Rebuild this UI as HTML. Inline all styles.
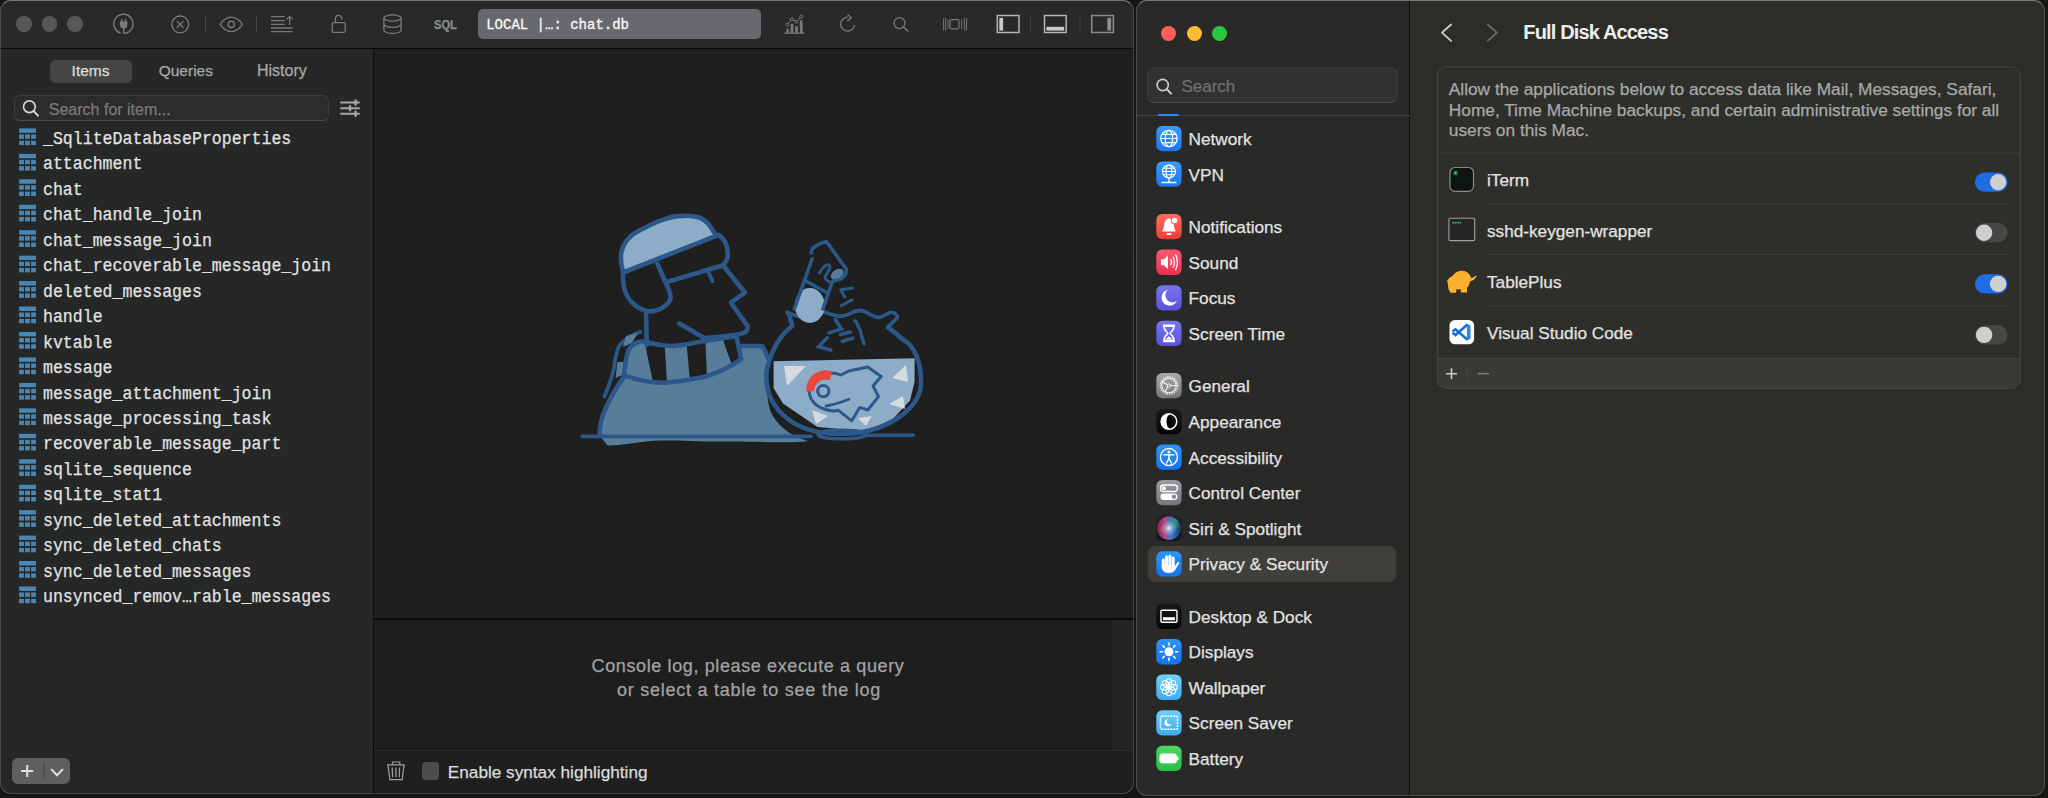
<!DOCTYPE html>
<html><head><meta charset="utf-8">
<style>
*{margin:0;padding:0;box-sizing:border-box}
html,body{width:2048px;height:798px;overflow:hidden;background:#161616;font-family:'Liberation Sans',sans-serif}
.a{position:absolute}
.t{position:absolute;white-space:pre;-webkit-text-stroke:0.25px currentColor}
</style></head><body>

<div class="a" style="left:0;top:0;width:1134px;height:794px;border-radius:11px;overflow:hidden;background:#1f1f1f">
<div class="a" style="left:0.00px;top:0.00px;width:1134.00px;height:48.00px;background:#272a29;"></div>
<div class="a" style="left:0.00px;top:47.50px;width:1134.00px;height:1.50px;background:#0b0b0b;"></div>
<div class="a" style="left:0.00px;top:49.00px;width:373.00px;height:745.00px;background:#262828;"></div>
<div class="a" style="left:372.50px;top:49.00px;width:1.50px;height:745.00px;background:#0b0b0b;"></div>
<div class="a" style="left:16.40px;top:16.40px;width:15.20px;height:15.20px;background:#565858;border-radius:50%"></div>
<div class="a" style="left:41.90px;top:16.40px;width:15.20px;height:15.20px;background:#565858;border-radius:50%"></div>
<div class="a" style="left:67.40px;top:16.40px;width:15.20px;height:15.20px;background:#565858;border-radius:50%"></div>
<div class="a" style="left:477.70px;top:9.00px;width:283.60px;height:29.70px;background:#68696c;border-radius:5px"></div>
<div class="t" style="left:486.20px;top:18px;font-size:14px;line-height:14px;color:#f6f6f6;font-weight:normal;font-family:'Liberation Mono',monospace;-webkit-text-stroke:0.35px #f6f6f6">LOCAL |…: chat.db</div>
<div class="t" style="left:434.20px;top:19px;font-size:12.5px;line-height:12.5px;color:#8d8d8d;font-weight:bold;font-family:'Liberation Sans',sans-serif;transform:scaleX(0.89);transform-origin:left">SQL</div>
<div class="a" style="left:50.00px;top:60.00px;width:82.00px;height:22.60px;background:#454545;border-radius:6px"></div>
<div class="t" style="left:71.60px;top:63px;font-size:15.5px;line-height:15.5px;color:#dedede;font-weight:normal;font-family:'Liberation Sans',sans-serif;">Items</div>
<div class="t" style="left:158.70px;top:63px;font-size:15.5px;line-height:15.5px;color:#a9a9a9;font-weight:normal;font-family:'Liberation Sans',sans-serif;">Queries</div>
<div class="t" style="left:257.00px;top:63px;font-size:16px;line-height:16px;color:#a9a9a9;font-weight:normal;font-family:'Liberation Sans',sans-serif;">History</div>
<div class="a" style="left:14.00px;top:95.00px;width:315.00px;height:26.00px;background:#2c2c2c;border-radius:6px;border:1px solid #3b3c3c;border-bottom-color:#4a4a4a"></div>
<div class="t" style="left:48.80px;top:102px;font-size:16px;line-height:16px;color:#7a7a7a;font-weight:normal;font-family:'Liberation Sans',sans-serif;">Search for item...</div>
<div class="t" style="left:43.00px;top:130px;font-size:19px;line-height:19px;color:#e3e3e3;font-weight:normal;font-family:'Liberation Mono',monospace;transform:scaleX(0.871);transform-origin:left">_SqliteDatabaseProperties</div>
<div class="t" style="left:43.00px;top:155px;font-size:19px;line-height:19px;color:#e3e3e3;font-weight:normal;font-family:'Liberation Mono',monospace;transform:scaleX(0.871);transform-origin:left">attachment</div>
<div class="t" style="left:43.00px;top:181px;font-size:19px;line-height:19px;color:#e3e3e3;font-weight:normal;font-family:'Liberation Mono',monospace;transform:scaleX(0.871);transform-origin:left">chat</div>
<div class="t" style="left:43.00px;top:206px;font-size:19px;line-height:19px;color:#e3e3e3;font-weight:normal;font-family:'Liberation Mono',monospace;transform:scaleX(0.871);transform-origin:left">chat_handle_join</div>
<div class="t" style="left:43.00px;top:232px;font-size:19px;line-height:19px;color:#e3e3e3;font-weight:normal;font-family:'Liberation Mono',monospace;transform:scaleX(0.871);transform-origin:left">chat_message_join</div>
<div class="t" style="left:43.00px;top:257px;font-size:19px;line-height:19px;color:#e3e3e3;font-weight:normal;font-family:'Liberation Mono',monospace;transform:scaleX(0.871);transform-origin:left">chat_recoverable_message_join</div>
<div class="t" style="left:43.00px;top:283px;font-size:19px;line-height:19px;color:#e3e3e3;font-weight:normal;font-family:'Liberation Mono',monospace;transform:scaleX(0.871);transform-origin:left">deleted_messages</div>
<div class="t" style="left:43.00px;top:308px;font-size:19px;line-height:19px;color:#e3e3e3;font-weight:normal;font-family:'Liberation Mono',monospace;transform:scaleX(0.871);transform-origin:left">handle</div>
<div class="t" style="left:43.00px;top:334px;font-size:19px;line-height:19px;color:#e3e3e3;font-weight:normal;font-family:'Liberation Mono',monospace;transform:scaleX(0.871);transform-origin:left">kvtable</div>
<div class="t" style="left:43.00px;top:359px;font-size:19px;line-height:19px;color:#e3e3e3;font-weight:normal;font-family:'Liberation Mono',monospace;transform:scaleX(0.871);transform-origin:left">message</div>
<div class="t" style="left:43.00px;top:385px;font-size:19px;line-height:19px;color:#e3e3e3;font-weight:normal;font-family:'Liberation Mono',monospace;transform:scaleX(0.871);transform-origin:left">message_attachment_join</div>
<div class="t" style="left:43.00px;top:410px;font-size:19px;line-height:19px;color:#e3e3e3;font-weight:normal;font-family:'Liberation Mono',monospace;transform:scaleX(0.871);transform-origin:left">message_processing_task</div>
<div class="t" style="left:43.00px;top:435px;font-size:19px;line-height:19px;color:#e3e3e3;font-weight:normal;font-family:'Liberation Mono',monospace;transform:scaleX(0.871);transform-origin:left">recoverable_message_part</div>
<div class="t" style="left:43.00px;top:461px;font-size:19px;line-height:19px;color:#e3e3e3;font-weight:normal;font-family:'Liberation Mono',monospace;transform:scaleX(0.871);transform-origin:left">sqlite_sequence</div>
<div class="t" style="left:43.00px;top:486px;font-size:19px;line-height:19px;color:#e3e3e3;font-weight:normal;font-family:'Liberation Mono',monospace;transform:scaleX(0.871);transform-origin:left">sqlite_stat1</div>
<div class="t" style="left:43.00px;top:512px;font-size:19px;line-height:19px;color:#e3e3e3;font-weight:normal;font-family:'Liberation Mono',monospace;transform:scaleX(0.871);transform-origin:left">sync_deleted_attachments</div>
<div class="t" style="left:43.00px;top:537px;font-size:19px;line-height:19px;color:#e3e3e3;font-weight:normal;font-family:'Liberation Mono',monospace;transform:scaleX(0.871);transform-origin:left">sync_deleted_chats</div>
<div class="t" style="left:43.00px;top:563px;font-size:19px;line-height:19px;color:#e3e3e3;font-weight:normal;font-family:'Liberation Mono',monospace;transform:scaleX(0.871);transform-origin:left">sync_deleted_messages</div>
<div class="t" style="left:43.00px;top:588px;font-size:19px;line-height:19px;color:#e3e3e3;font-weight:normal;font-family:'Liberation Mono',monospace;transform:scaleX(0.871);transform-origin:left">unsynced_remov…rable_messages</div>
<div class="a" style="left:11.60px;top:758.20px;width:58.30px;height:25.70px;background:#5f5f5f;border-radius:6px"></div>
<div class="a" style="left:374.00px;top:618.00px;width:760.00px;height:1.50px;background:#0b0b0b;"></div>
<div class="a" style="left:374.00px;top:619.50px;width:760.00px;height:131.00px;background:#1e1e1e;"></div>
<div class="a" style="left:1113.00px;top:619.50px;width:1.00px;height:131.00px;background:#2c2c2c;"></div>
<div class="a" style="left:1114.00px;top:619.50px;width:20.00px;height:131.00px;background:#242424;"></div>
<div class="a" style="left:374.00px;top:750.00px;width:760.00px;height:1.00px;background:#2d2d2d;"></div>
<div class="a" style="left:374.00px;top:751.00px;width:760.00px;height:43.00px;background:#1f1f1f;"></div>
<div class="t" style="left:591.60px;top:657px;font-size:18px;line-height:18px;color:#a3a3a3;font-weight:normal;font-family:'Liberation Sans',sans-serif;letter-spacing:0.62px;">Console log, please execute a query</div>
<div class="t" style="left:616.90px;top:681px;font-size:18px;line-height:18px;color:#a3a3a3;font-weight:normal;font-family:'Liberation Sans',sans-serif;letter-spacing:0.75px;">or select a table to see the log</div>
<div class="a" style="left:422.10px;top:762.00px;width:17.30px;height:18.00px;background:#4d4d4d;border-radius:4px"></div>
<div class="t" style="left:447.80px;top:764px;font-size:17.2px;line-height:17.2px;color:#dcdcdc;font-weight:normal;font-family:'Liberation Sans',sans-serif;">Enable syntax highlighting</div>
<svg class="a" style="left:0;top:0" width="1134" height="794" viewBox="0 0 1134 794"><rect x="19.1" y="128.40" width="16.9" height="4.4" fill="#4888b8"/><rect x="19.1" y="134.40" width="4.8" height="4.4" fill="#4888b8"/><rect x="25.1" y="134.40" width="4.8" height="4.4" fill="#4888b8"/><rect x="31.1" y="134.40" width="4.8" height="4.4" fill="#4888b8"/><rect x="19.1" y="140.70" width="4.8" height="4.4" fill="#4888b8"/><rect x="25.1" y="140.70" width="4.8" height="4.4" fill="#4888b8"/><rect x="31.1" y="140.70" width="4.8" height="4.4" fill="#4888b8"/><rect x="19.1" y="153.85" width="16.9" height="4.4" fill="#4888b8"/><rect x="19.1" y="159.85" width="4.8" height="4.4" fill="#4888b8"/><rect x="25.1" y="159.85" width="4.8" height="4.4" fill="#4888b8"/><rect x="31.1" y="159.85" width="4.8" height="4.4" fill="#4888b8"/><rect x="19.1" y="166.15" width="4.8" height="4.4" fill="#4888b8"/><rect x="25.1" y="166.15" width="4.8" height="4.4" fill="#4888b8"/><rect x="31.1" y="166.15" width="4.8" height="4.4" fill="#4888b8"/><rect x="19.1" y="179.30" width="16.9" height="4.4" fill="#4888b8"/><rect x="19.1" y="185.30" width="4.8" height="4.4" fill="#4888b8"/><rect x="25.1" y="185.30" width="4.8" height="4.4" fill="#4888b8"/><rect x="31.1" y="185.30" width="4.8" height="4.4" fill="#4888b8"/><rect x="19.1" y="191.60" width="4.8" height="4.4" fill="#4888b8"/><rect x="25.1" y="191.60" width="4.8" height="4.4" fill="#4888b8"/><rect x="31.1" y="191.60" width="4.8" height="4.4" fill="#4888b8"/><rect x="19.1" y="204.75" width="16.9" height="4.4" fill="#4888b8"/><rect x="19.1" y="210.75" width="4.8" height="4.4" fill="#4888b8"/><rect x="25.1" y="210.75" width="4.8" height="4.4" fill="#4888b8"/><rect x="31.1" y="210.75" width="4.8" height="4.4" fill="#4888b8"/><rect x="19.1" y="217.05" width="4.8" height="4.4" fill="#4888b8"/><rect x="25.1" y="217.05" width="4.8" height="4.4" fill="#4888b8"/><rect x="31.1" y="217.05" width="4.8" height="4.4" fill="#4888b8"/><rect x="19.1" y="230.20" width="16.9" height="4.4" fill="#4888b8"/><rect x="19.1" y="236.20" width="4.8" height="4.4" fill="#4888b8"/><rect x="25.1" y="236.20" width="4.8" height="4.4" fill="#4888b8"/><rect x="31.1" y="236.20" width="4.8" height="4.4" fill="#4888b8"/><rect x="19.1" y="242.50" width="4.8" height="4.4" fill="#4888b8"/><rect x="25.1" y="242.50" width="4.8" height="4.4" fill="#4888b8"/><rect x="31.1" y="242.50" width="4.8" height="4.4" fill="#4888b8"/><rect x="19.1" y="255.65" width="16.9" height="4.4" fill="#4888b8"/><rect x="19.1" y="261.65" width="4.8" height="4.4" fill="#4888b8"/><rect x="25.1" y="261.65" width="4.8" height="4.4" fill="#4888b8"/><rect x="31.1" y="261.65" width="4.8" height="4.4" fill="#4888b8"/><rect x="19.1" y="267.95" width="4.8" height="4.4" fill="#4888b8"/><rect x="25.1" y="267.95" width="4.8" height="4.4" fill="#4888b8"/><rect x="31.1" y="267.95" width="4.8" height="4.4" fill="#4888b8"/><rect x="19.1" y="281.10" width="16.9" height="4.4" fill="#4888b8"/><rect x="19.1" y="287.10" width="4.8" height="4.4" fill="#4888b8"/><rect x="25.1" y="287.10" width="4.8" height="4.4" fill="#4888b8"/><rect x="31.1" y="287.10" width="4.8" height="4.4" fill="#4888b8"/><rect x="19.1" y="293.40" width="4.8" height="4.4" fill="#4888b8"/><rect x="25.1" y="293.40" width="4.8" height="4.4" fill="#4888b8"/><rect x="31.1" y="293.40" width="4.8" height="4.4" fill="#4888b8"/><rect x="19.1" y="306.55" width="16.9" height="4.4" fill="#4888b8"/><rect x="19.1" y="312.55" width="4.8" height="4.4" fill="#4888b8"/><rect x="25.1" y="312.55" width="4.8" height="4.4" fill="#4888b8"/><rect x="31.1" y="312.55" width="4.8" height="4.4" fill="#4888b8"/><rect x="19.1" y="318.85" width="4.8" height="4.4" fill="#4888b8"/><rect x="25.1" y="318.85" width="4.8" height="4.4" fill="#4888b8"/><rect x="31.1" y="318.85" width="4.8" height="4.4" fill="#4888b8"/><rect x="19.1" y="332.00" width="16.9" height="4.4" fill="#4888b8"/><rect x="19.1" y="338.00" width="4.8" height="4.4" fill="#4888b8"/><rect x="25.1" y="338.00" width="4.8" height="4.4" fill="#4888b8"/><rect x="31.1" y="338.00" width="4.8" height="4.4" fill="#4888b8"/><rect x="19.1" y="344.30" width="4.8" height="4.4" fill="#4888b8"/><rect x="25.1" y="344.30" width="4.8" height="4.4" fill="#4888b8"/><rect x="31.1" y="344.30" width="4.8" height="4.4" fill="#4888b8"/><rect x="19.1" y="357.45" width="16.9" height="4.4" fill="#4888b8"/><rect x="19.1" y="363.45" width="4.8" height="4.4" fill="#4888b8"/><rect x="25.1" y="363.45" width="4.8" height="4.4" fill="#4888b8"/><rect x="31.1" y="363.45" width="4.8" height="4.4" fill="#4888b8"/><rect x="19.1" y="369.75" width="4.8" height="4.4" fill="#4888b8"/><rect x="25.1" y="369.75" width="4.8" height="4.4" fill="#4888b8"/><rect x="31.1" y="369.75" width="4.8" height="4.4" fill="#4888b8"/><rect x="19.1" y="382.90" width="16.9" height="4.4" fill="#4888b8"/><rect x="19.1" y="388.90" width="4.8" height="4.4" fill="#4888b8"/><rect x="25.1" y="388.90" width="4.8" height="4.4" fill="#4888b8"/><rect x="31.1" y="388.90" width="4.8" height="4.4" fill="#4888b8"/><rect x="19.1" y="395.20" width="4.8" height="4.4" fill="#4888b8"/><rect x="25.1" y="395.20" width="4.8" height="4.4" fill="#4888b8"/><rect x="31.1" y="395.20" width="4.8" height="4.4" fill="#4888b8"/><rect x="19.1" y="408.35" width="16.9" height="4.4" fill="#4888b8"/><rect x="19.1" y="414.35" width="4.8" height="4.4" fill="#4888b8"/><rect x="25.1" y="414.35" width="4.8" height="4.4" fill="#4888b8"/><rect x="31.1" y="414.35" width="4.8" height="4.4" fill="#4888b8"/><rect x="19.1" y="420.65" width="4.8" height="4.4" fill="#4888b8"/><rect x="25.1" y="420.65" width="4.8" height="4.4" fill="#4888b8"/><rect x="31.1" y="420.65" width="4.8" height="4.4" fill="#4888b8"/><rect x="19.1" y="433.80" width="16.9" height="4.4" fill="#4888b8"/><rect x="19.1" y="439.80" width="4.8" height="4.4" fill="#4888b8"/><rect x="25.1" y="439.80" width="4.8" height="4.4" fill="#4888b8"/><rect x="31.1" y="439.80" width="4.8" height="4.4" fill="#4888b8"/><rect x="19.1" y="446.10" width="4.8" height="4.4" fill="#4888b8"/><rect x="25.1" y="446.10" width="4.8" height="4.4" fill="#4888b8"/><rect x="31.1" y="446.10" width="4.8" height="4.4" fill="#4888b8"/><rect x="19.1" y="459.25" width="16.9" height="4.4" fill="#4888b8"/><rect x="19.1" y="465.25" width="4.8" height="4.4" fill="#4888b8"/><rect x="25.1" y="465.25" width="4.8" height="4.4" fill="#4888b8"/><rect x="31.1" y="465.25" width="4.8" height="4.4" fill="#4888b8"/><rect x="19.1" y="471.55" width="4.8" height="4.4" fill="#4888b8"/><rect x="25.1" y="471.55" width="4.8" height="4.4" fill="#4888b8"/><rect x="31.1" y="471.55" width="4.8" height="4.4" fill="#4888b8"/><rect x="19.1" y="484.70" width="16.9" height="4.4" fill="#4888b8"/><rect x="19.1" y="490.70" width="4.8" height="4.4" fill="#4888b8"/><rect x="25.1" y="490.70" width="4.8" height="4.4" fill="#4888b8"/><rect x="31.1" y="490.70" width="4.8" height="4.4" fill="#4888b8"/><rect x="19.1" y="497.00" width="4.8" height="4.4" fill="#4888b8"/><rect x="25.1" y="497.00" width="4.8" height="4.4" fill="#4888b8"/><rect x="31.1" y="497.00" width="4.8" height="4.4" fill="#4888b8"/><rect x="19.1" y="510.15" width="16.9" height="4.4" fill="#4888b8"/><rect x="19.1" y="516.15" width="4.8" height="4.4" fill="#4888b8"/><rect x="25.1" y="516.15" width="4.8" height="4.4" fill="#4888b8"/><rect x="31.1" y="516.15" width="4.8" height="4.4" fill="#4888b8"/><rect x="19.1" y="522.45" width="4.8" height="4.4" fill="#4888b8"/><rect x="25.1" y="522.45" width="4.8" height="4.4" fill="#4888b8"/><rect x="31.1" y="522.45" width="4.8" height="4.4" fill="#4888b8"/><rect x="19.1" y="535.60" width="16.9" height="4.4" fill="#4888b8"/><rect x="19.1" y="541.60" width="4.8" height="4.4" fill="#4888b8"/><rect x="25.1" y="541.60" width="4.8" height="4.4" fill="#4888b8"/><rect x="31.1" y="541.60" width="4.8" height="4.4" fill="#4888b8"/><rect x="19.1" y="547.90" width="4.8" height="4.4" fill="#4888b8"/><rect x="25.1" y="547.90" width="4.8" height="4.4" fill="#4888b8"/><rect x="31.1" y="547.90" width="4.8" height="4.4" fill="#4888b8"/><rect x="19.1" y="561.05" width="16.9" height="4.4" fill="#4888b8"/><rect x="19.1" y="567.05" width="4.8" height="4.4" fill="#4888b8"/><rect x="25.1" y="567.05" width="4.8" height="4.4" fill="#4888b8"/><rect x="31.1" y="567.05" width="4.8" height="4.4" fill="#4888b8"/><rect x="19.1" y="573.35" width="4.8" height="4.4" fill="#4888b8"/><rect x="25.1" y="573.35" width="4.8" height="4.4" fill="#4888b8"/><rect x="31.1" y="573.35" width="4.8" height="4.4" fill="#4888b8"/><rect x="19.1" y="586.50" width="16.9" height="4.4" fill="#4888b8"/><rect x="19.1" y="592.50" width="4.8" height="4.4" fill="#4888b8"/><rect x="25.1" y="592.50" width="4.8" height="4.4" fill="#4888b8"/><rect x="31.1" y="592.50" width="4.8" height="4.4" fill="#4888b8"/><rect x="19.1" y="598.80" width="4.8" height="4.4" fill="#4888b8"/><rect x="25.1" y="598.80" width="4.8" height="4.4" fill="#4888b8"/><rect x="31.1" y="598.80" width="4.8" height="4.4" fill="#4888b8"/><path d="M21.1,770.9 H33.2 M27.2,764.9 V777" stroke="#e0e0e0" stroke-width="2"/><path d="M44.2,764 V778.7" stroke="#4a4a4a" stroke-width="1.5"/><path d="M51.1,769.1 L57,775.2 L63,769.1" fill="none" stroke="#e0e0e0" stroke-width="2"/><path d="M 120.6,33.0 A 9.6,9.6 0 1 1 124.1,33.4" fill="none" stroke="#7a7a7a" stroke-width="1.4"/><path d="M119.9,21.6 h7.6 v2.6 a3.8,4.2 0 0 1 -7.6,0 z" fill="#7a7a7a"/><rect x="121.1" y="19" width="1.5" height="3" fill="#7a7a7a"/><rect x="124.8" y="19" width="1.5" height="3" fill="#7a7a7a"/><path d="M123.7,27.5 V33.4" stroke="#7a7a7a" stroke-width="1.5"/><circle cx="180.2" cy="24.4" r="8.4" fill="none" stroke="#7a7a7a" stroke-width="1.3"/><path d="M176.9,21.1 L183.5,27.7 M183.5,21.1 L176.9,27.7" stroke="#7a7a7a" stroke-width="1.3"/><path d="M205.5,15.2 V32.7 M256.5,15.2 V32.7" stroke="#474848" stroke-width="1"/><path d="M220.2,24.4 C224,18.5 227.5,17.2 231.3,17.2 C235.1,17.2 238.6,18.5 242.4,24.4 C238.6,30.3 235.1,31.6 231.3,31.6 C227.5,31.6 224,30.3 220.2,24.4 Z" fill="none" stroke="#7a7a7a" stroke-width="1.3"/><circle cx="231.3" cy="24.4" r="3.1" fill="none" stroke="#7a7a7a" stroke-width="1.4"/><path d="M271,16.6 H284.8 M271,20.6 H284.8 M271,24.3 H284.8 M271,28 H292.6 M271,31.6 H292.6" stroke="#7a7a7a" stroke-width="1.3"/><path d="M289.6,16.3 V25 M286.6,19.3 L289.6,16.3 L292.6,19.3" fill="none" stroke="#7a7a7a" stroke-width="1.2"/><rect x="332.2" y="22.6" width="13" height="9.8" rx="1.5" fill="none" stroke="#7a7a7a" stroke-width="1.3"/><path d="M335.4,22.6 V18.5 A3.2,3.2 0 0 1 341.8,18.5 V19.8" fill="none" stroke="#7a7a7a" stroke-width="1.3"/><ellipse cx="392.5" cy="18" rx="8.6" ry="3.1" fill="none" stroke="#7a7a7a" stroke-width="1.3"/><path d="M383.9,18 V30.3 A8.6,3.1 0 0 0 401.1,30.3 V18 M383.9,24.2 A8.6,3.1 0 0 0 401.1,24.2" fill="none" stroke="#7a7a7a" stroke-width="1.3"/><path d="M784.3,33.2 H804.3" stroke="#7a7a7a" stroke-width="1.2"/><rect x="786.4" y="28.5" width="2.2" height="4.5" fill="#7a7a7a"/><rect x="790.6" y="23.8" width="2.8" height="9.2" fill="#7a7a7a"/><rect x="795.2" y="26.2" width="2.6" height="6.8" fill="#7a7a7a"/><rect x="799.8" y="20.4" width="2.8" height="12.6" fill="#7a7a7a"/><path d="M787.2,24.6 L791.8,19.2 L796.5,21.7 L801.2,16.6" fill="none" stroke="#7a7a7a" stroke-width="1"/><g fill="#272a29" stroke="#7a7a7a" stroke-width="1"><circle cx="787.2" cy="24.6" r="1.5"/><circle cx="791.8" cy="19.2" r="1.5"/><circle cx="796.5" cy="21.7" r="1.5"/><circle cx="801.2" cy="16.6" r="1.5"/></g><path d="M854.6,25 A7,7 0 1 1 847.8,17.1" fill="none" stroke="#7a7a7a" stroke-width="1.3"/><path d="M847.3,14.3 L851.2,17.7 L847.3,21" fill="none" stroke="#7a7a7a" stroke-width="1.3"/><circle cx="899.5" cy="23.1" r="5.5" fill="none" stroke="#7a7a7a" stroke-width="1.3"/><path d="M903.5,27.1 L908.3,31.6" stroke="#7a7a7a" stroke-width="1.4"/><path d="M943.6,18 V30.5 M945.6,18 V30.5 M964.6,18 V30.5 M966.6,18 V30.5 M948,19.3 V29 M961.8,19.3 V29" stroke="#7a7a7a" stroke-width="0.9"/><rect x="950" y="19.6" width="9" height="9.2" rx="1.2" fill="none" stroke="#7a7a7a" stroke-width="1.2"/><rect x="997.3" y="15.5" width="21.7" height="17" fill="none" stroke="#b3b3b3" stroke-width="1.5"/><rect x="999.3" y="17.9" width="3.8" height="12.7" fill="#c9c9c9"/><path d="M1030.5,15 V33 M1080,15 V33" stroke="#3b3c3c" stroke-width="1"/><rect x="1044.5" y="15.5" width="21.7" height="17" fill="none" stroke="#b3b3b3" stroke-width="1.5"/><rect x="1046.4" y="26.8" width="17.8" height="3.8" fill="#c9c9c9"/><rect x="1091.7" y="15.5" width="21.7" height="17" fill="none" stroke="#8c8c8c" stroke-width="1.5"/><rect x="1107.3" y="17.9" width="3.8" height="12.7" fill="#8c8c8c"/><circle cx="29.4" cy="106.8" r="5.9" fill="none" stroke="#d6d6d6" stroke-width="1.7"/><path d="M33.6,111 L38,115.6" stroke="#d6d6d6" stroke-width="2" stroke-linecap="round"/><path d="M340.4,102.4 H359.7 M340.4,108.2 H359.7 M340.4,113.8 H359.7" stroke="#a8a8a8" stroke-width="2"/><path d="M355.6,99.4 V105.4 M350,105.2 V111.2 M355.6,110.8 V116.8" stroke="#a8a8a8" stroke-width="2.4"/><path d="M392.5,764.6 V762 H399.8 V764.6 M387,764.9 H404.8 M388,765 L389.9,779.6 H402.2 L404,765 M392.2,767.5 L392.6,777.3 M395.9,767.5 V777.3 M399.6,767.5 L399.2,777.3" fill="none" stroke="#a0a0a0" stroke-width="1.2"/>
<g stroke-linejoin="round" stroke-linecap="round">
<path d="M607.7,445.4 C603,440 600,436 599.5,434 C600,425 602,416 604.4,411.2 C610,398 617,386 624,377 C640,381 652,383 664.7,382.7 C680,382 693,379 703.8,377 C718,373 730,367 741.2,359.1 L741.2,346 L762.4,346 C765,350 766.5,354 767.3,357.5 C766,375 766,395 770,410 C776,425 790,436 808,441 C790,444 760,441 730,441.5 C700,442 680,440 661.4,440.5 C640,441 620,446 607.7,445.4 Z" fill="#587d9a"/>
<path d="M641.9,341.2 C650,343 660,346 671.2,346 C682,346 692,343 703.8,341.2 C715,339.5 726,337.5 736.4,336.3 L741.2,359.1 C730,367 718,373 703.8,377 C693,379 680,382 664.7,382.7 C652,383 640,381 624,375.4 C625,365 626,355 628.9,349.3 C632,345 636,342 641.9,341.2 Z" fill="#587d9a"/>
<path d="M645,342.5 L664.7,345.5 L667,382.5 L653,381.5 Q648,360 645,342.5 Z M686.7,345.5 L705.4,341.5 L707,377 L690,380.5 Q688,360 686.7,345.5 Z M723,339 L736.4,336.5 L740,359.5 L732,364.5 Q726,350 723,339 Z" fill="#1f1f1f"/>
<path d="M640.3,332 C632,334 624,340 619,346 C616,352 615,360 614.2,367.2 C612,378 608,388 604.4,396.5" fill="none" stroke="#2b5888" stroke-width="3.8"/>
<path d="M626,336 L638,333 L632,343 L623,347 Z M617.5,362 L623.5,362 L622.5,375 L615.5,378 Z" fill="#587d9a"/>
<path d="M582.4,436.4 H811" fill="none" stroke="#2b5888" stroke-width="3.8"/>
<path d="M599.5,434 C600,425 602,416 604.4,411.2 C610,398 617,386 624,377" fill="none" stroke="#2b5888" stroke-width="4.6"/>
<path d="M624,375.4 C640,381 652,383 664.7,382.7 C680,382 693,379 703.8,377 C718,373 730,367 741.2,359.1 L736.4,336.3" fill="none" stroke="#2b5888" stroke-width="4.6"/>
<path d="M624,375.4 C625,365 626,355 628.9,349.3 C632,345 636,342 641.9,341.2 C650,343 660,346 671.2,346 C682,346 692,343 703.8,341.2 C715,339.5 726,337.5 736.4,336.3" fill="none" stroke="#2b5888" stroke-width="4.6"/>
<path d="M741.2,346 L762.4,346 C765,350 766.5,354 767.3,357.5" fill="none" stroke="#2b5888" stroke-width="4.6"/>
<path d="M623.2,272.5 C620,262 620,250 625.8,241.8 C630,236 634,233 638,231.3 C650,225 656,222 662.6,219.9 C670,217 676,216 683.7,215.9 C690,215.5 695,216 699.5,217.6 C705,220 708,223 710,226 C712,229 714,232 715.3,234 Z" fill="#8dacc7"/>
<path d="M623.2,272.5 C620,262 620,250 625.8,241.8 C630,236 634,233 638,231.3 C650,225 656,222 662.6,219.9 C670,217 676,216 683.7,215.9 C690,215.5 695,216 699.5,217.6 C705,220 708,223 710,226 C712,229 714,232 715.3,234" fill="none" stroke="#2b5888" stroke-width="4.6"/>
<path d="M623.2,272.5 L718.8,234.8 C722,237 724.5,240 725.8,243.6 C727.5,248 728,253 727.5,257.6 C726.5,261 724.5,264 722.3,265.5 L666.1,282.2" fill="none" stroke="#2b5888" stroke-width="4.6"/>
<path d="M623.2,273.4 C622.5,278 623,283 624,287.5 C626,295 629,300 632.8,303.2 C637,307 642,310 646.8,311.1 C652,312 658,310.5 662.6,307.6 C667,305 670,301 670.5,298 C671,294 669,290 667.9,287.5 L657.4,263.8" fill="none" stroke="#2b5888" stroke-width="4.6"/>
<path d="M707.4,270 L712.6,281.3" fill="none" stroke="#2b5888" stroke-width="3.8"/>
<path d="M723.2,265.5 L745.1,292.7 L731,302.4 C732.5,305 734.5,308 736.3,310.3 L747.7,326 C748,329 747,331 745,332.2 C742,334 739,334.5 736.3,334.8 L704.7,338.3 L679.3,323.4" fill="none" stroke="#2b5888" stroke-width="4.6"/>
<path d="M646,312 L646.8,345" fill="none" stroke="#2b5888" stroke-width="4.6"/>
<path d="M773.6,361.3 L914.6,358.2 L914.6,381.7 L910,400.5 L892.7,419.3 L870.8,431.8 L817.5,427 L783,403.6 L773.6,388 Z" fill="#8dacc7"/>
<path d="M784,366 L806,366 L787,386 Z M906,365 L892,378 L908,382 Z M903,396 L889,404 L905,409 Z M812,410 L828,416 L816,424 Z M858,418 L872,416 L866,426 Z" fill="#d5dade"/>
<path d="M789,314 L792.3,326 C780,335 770,352 766.5,372 C764,405 790,434 840,434 C885,434 918,410 920.9,386 C922,362 914,345 902.8,339.5 C898,335 893,331 887.9,327.2" fill="none" stroke="#2b5888" stroke-width="4.6"/>
<path d="M787,312.3 C790,313 792,314.5 794,315 C798,316.5 802,317.5 806.3,317.1 C812,316 816,311.5 821.2,311.8 C828,312 834,316.5 841.4,316.2 C848,316 853,310.5 859.8,310.5 C867,310.5 872,317.5 878.2,317.5 C884,317.5 889,311 893.2,312.7 C897,314 898,316 896.7,318.5 L887.9,327.2" fill="none" stroke="#2b5888" stroke-width="3.8"/>
<ellipse cx="842" cy="434.5" rx="24" ry="4.4" fill="none" stroke="#2b5888" stroke-width="3.4"/>
<path d="M866,435.3 H913" stroke="#2b5888" stroke-width="3.6"/>
<path d="M840.8,375 C832,371 818,373 811,383 C806,394 812,405 824,409 C830,411 836,411 838.1,410.1 L851.6,420.9 L859.7,407.4 L867.8,410 L878.5,396.6 L873,385.9 L881.2,376.4 L867.8,367 L849,371 Z" fill="#8dacc7" stroke="#2b5888" stroke-width="3"/>
<path d="M806.5,392 C805,382 812,372 823,370.5 C827,370 830,371 832,372 L830,380 C822,378 815,382 814,391 Z" fill="#e8483c"/>
<path d="M826,406 C834,405 842,402 849,399.3" fill="none" stroke="#2b5888" stroke-width="2.8"/>
<circle cx="823.3" cy="391.2" r="5.6" fill="none" stroke="#2b5888" stroke-width="3"/>
<ellipse cx="809.8" cy="305.5" rx="15" ry="17.5" fill="#8dacc7"/>
<ellipse cx="837.1" cy="274.3" rx="7" ry="4.6" transform="rotate(-35 837.1 274.3)" fill="#587d9a"/>
<path d="M812.1,258.8 L794.3,309 M832.4,281.4 L822.9,309 M811.5,253 C810,249 818,243 826.4,241.5 L846.1,268.9 C847,276 842,280 832.4,281.4 M805.6,280.8 L827,292.7" fill="none" stroke="#2b5888" stroke-width="3.6"/>
<path d="M819.3,273.1 C822,268 827,263 829.5,265.5 C832,268 826,274 825.2,276.7 C824,279 828,281 830,282.6" fill="none" stroke="#2b5888" stroke-width="3"/>
<path d="M852.6,288 L840.7,289.8 L844.9,296.9 M841.3,305.8 L852,299.9" fill="none" stroke="#2b5888" stroke-width="3"/>
<path d="M835.3,319.3 L841.4,329 L829.1,332.9 M827.4,337.7 L818.6,346.5 L830.9,350 M840.5,334.6 L850.2,332 M842.3,341.2 L852.8,338.3" fill="none" stroke="#2b5888" stroke-width="3.6" stroke-linejoin="miter"/>
<path d="M854.6,321 C858,322 857,326 859,328 C862,331 860,334 862,337 C864,340 862,342 864.2,343.9" fill="none" stroke="#2b5888" stroke-width="3.4"/>
</g></svg>
</div>
<div class="a" style="left:0;top:0;width:1134px;height:794px;border-radius:11px;border:1px solid rgba(255,255,255,0.17);border-top-color:rgba(255,255,255,0.36)"></div>
<div class="a" style="left:1135.5px;top:0;width:909.5px;height:795.5px;border-radius:11px;overflow:hidden;background:#2c2d29">
<div class="a" style="left:0.00px;top:0.00px;width:274.00px;height:796.00px;background:#292927;"></div>
<div class="a" style="left:273.70px;top:0.00px;width:1.00px;height:796.00px;background:#0e0e0e;"></div>
<div class="a" style="left:25.40px;top:25.50px;width:15.00px;height:15.00px;background:#ff5f57;border-radius:50%"></div>
<div class="a" style="left:51.00px;top:25.50px;width:15.00px;height:15.00px;background:#febc2e;border-radius:50%"></div>
<div class="a" style="left:76.00px;top:25.50px;width:15.00px;height:15.00px;background:#28c840;border-radius:50%"></div>
<div class="a" style="left:11.50px;top:67.00px;width:251.00px;height:36.00px;background:#313131;border-radius:8px;border:1px solid #3b3b3b;border-bottom-color:#4a4a4a"></div>
<div class="a" style="left:0.00px;top:114.60px;width:274.00px;height:1.40px;background:#464646;"></div>
<div class="a" style="left:22.70px;top:114.20px;width:20.50px;height:1.90px;background:#2a8af6;border-radius:1px"></div>
<div class="a" style="left:12.80px;top:546.40px;width:248.00px;height:35.20px;background:#403f3c;border-radius:7px"></div>
<svg class="a" style="left:0;top:0" width="909.5" height="796" viewBox="1135.5 0 909.5 796"><circle cx="1162.2" cy="85" r="5.6" fill="none" stroke="#cfcfcf" stroke-width="1.6"/><path d="M1166.2,89 L1170.6,93.6" stroke="#cfcfcf" stroke-width="1.9" stroke-linecap="round"/><defs><linearGradient id="g0" x1="0" y1="0" x2="0" y2="1"><stop offset="0" stop-color="#3b9cfb"/><stop offset="1" stop-color="#1a76f0"/></linearGradient><linearGradient id="g1" x1="0" y1="0" x2="0" y2="1"><stop offset="0" stop-color="#3b9cfb"/><stop offset="1" stop-color="#1a76f0"/></linearGradient><linearGradient id="g2" x1="0" y1="0" x2="0" y2="1"><stop offset="0" stop-color="#ff6f61"/><stop offset="1" stop-color="#ef3e34"/></linearGradient><linearGradient id="g3" x1="0" y1="0" x2="0" y2="1"><stop offset="0" stop-color="#fb5872"/><stop offset="1" stop-color="#ec3150"/></linearGradient><linearGradient id="g4" x1="0" y1="0" x2="0" y2="1"><stop offset="0" stop-color="#7a74f0"/><stop offset="1" stop-color="#5a52dc"/></linearGradient><linearGradient id="g5" x1="0" y1="0" x2="0" y2="1"><stop offset="0" stop-color="#7a74f0"/><stop offset="1" stop-color="#5a52dc"/></linearGradient><linearGradient id="g6" x1="0" y1="0" x2="0" y2="1"><stop offset="0" stop-color="#a8a8ac"/><stop offset="1" stop-color="#78787c"/></linearGradient><linearGradient id="g7" x1="0" y1="0" x2="0" y2="1"><stop offset="0" stop-color="#1a1a1a"/><stop offset="1" stop-color="#050505"/></linearGradient><linearGradient id="g8" x1="0" y1="0" x2="0" y2="1"><stop offset="0" stop-color="#2f93fb"/><stop offset="1" stop-color="#1474ef"/></linearGradient><linearGradient id="g9" x1="0" y1="0" x2="0" y2="1"><stop offset="0" stop-color="#9a9aa0"/><stop offset="1" stop-color="#76767c"/></linearGradient><linearGradient id="g10" x1="0" y1="0" x2="0" y2="1"><stop offset="0" stop-color="#1c2430"/><stop offset="1" stop-color="#121820"/></linearGradient><linearGradient id="g11" x1="0" y1="0" x2="0" y2="1"><stop offset="0" stop-color="#2f93fb"/><stop offset="1" stop-color="#1474ef"/></linearGradient><linearGradient id="g12" x1="0" y1="0" x2="0" y2="1"><stop offset="0" stop-color="#1a1a1a"/><stop offset="1" stop-color="#050505"/></linearGradient><linearGradient id="g13" x1="0" y1="0" x2="0" y2="1"><stop offset="0" stop-color="#2f93fb"/><stop offset="1" stop-color="#1474ef"/></linearGradient><linearGradient id="g14" x1="0" y1="0" x2="0" y2="1"><stop offset="0" stop-color="#6fd0fb"/><stop offset="1" stop-color="#3eaaf0"/></linearGradient><linearGradient id="g15" x1="0" y1="0" x2="0" y2="1"><stop offset="0" stop-color="#6fd0fb"/><stop offset="1" stop-color="#3eaaf0"/></linearGradient><linearGradient id="g16" x1="0" y1="0" x2="0" y2="1"><stop offset="0" stop-color="#4cd964"/><stop offset="1" stop-color="#2bbd48"/></linearGradient><linearGradient id="siri" x1="0" y1="0" x2="1" y2="0"><stop offset="0" stop-color="#8a1c48"/><stop offset="0.35" stop-color="#b04a8a"/><stop offset="0.6" stop-color="#3a78c8"/><stop offset="1" stop-color="#14406a"/></linearGradient><radialGradient id="siriw" cx="0.5" cy="0.5" r="0.5"><stop offset="0" stop-color="#ffffff" stop-opacity="0.95"/><stop offset="0.45" stop-color="#a0d0ff" stop-opacity="0.5"/><stop offset="1" stop-color="#a0d0ff" stop-opacity="0"/></radialGradient></defs><rect x="1155.8" y="125.9" width="25.3" height="25.3" rx="6" fill="url(#g0)"/><g fill="none" stroke="#ffffff" stroke-width="1.2"><circle cx="1168.45" cy="138.5" r="8.2"/><ellipse cx="1168.45" cy="138.5" rx="3.69" ry="8.2"/><path d="M1160.25,138.5 H1176.65 M1161.48,134.40 H1175.42 M1161.48,142.60 H1175.42"/></g><rect x="1155.8" y="161.4" width="25.3" height="25.3" rx="6" fill="url(#g1)"/><g fill="none" stroke="#ffffff" stroke-width="1.2"><circle cx="1168.45" cy="171.5" r="6.5"/><ellipse cx="1168.45" cy="171.5" rx="2.93" ry="6.5"/><path d="M1161.95,171.5 H1174.95 M1162.92,168.25 H1173.98 M1162.92,174.75 H1173.98"/></g><path d="M1168.45,178.0 V182.5 M1160.95,182.5 H1175.95" stroke="#ffffff" stroke-width="1.3"/><rect x="1155.8" y="214.0" width="25.3" height="25.3" rx="6" fill="url(#g2)"/><path d="M1161.45,231.6 C1163.45,228.6 1163.45,225.6 1163.95,223.6 C1164.45,219.6 1167.45,218.6 1168.45,218.6 C1169.45,218.6 1172.45,219.6 1172.95,223.6 C1173.45,225.6 1173.45,228.6 1175.45,231.6 Z" fill="#ffffff"/><rect x="1165.95" y="233.1" width="5" height="1.8" rx="0.9" fill="#ffffff"/><circle cx="1173.95" cy="220.6" r="3.3" fill="#ffffff" stroke="#f55348" stroke-width="1"/><rect x="1155.8" y="249.6" width="25.3" height="25.3" rx="6" fill="url(#g3)"/><path d="M1160.45,259.2 H1163.45 L1167.45,255.2 V269.2 L1163.45,265.2 H1160.45 Z" fill="#ffffff"/><path d="M1169.95,259.2 Q1171.95,262.2 1169.95,265.2 M1172.45,256.7 Q1175.45,262.2 1172.45,267.7 M1174.95,254.2 Q1178.95,262.2 1174.95,270.2" fill="none" stroke="#ffffff" stroke-width="1.3"/><rect x="1155.8" y="285.2" width="25.3" height="25.3" rx="6" fill="url(#g4)"/><path d="M1167.45,289.8 A8,8 0 1 0 1176.45,300.8 A7,7 0 0 1 1167.45,289.8 Z" fill="#ffffff"/><rect x="1155.8" y="320.7" width="25.3" height="25.3" rx="6" fill="url(#g5)"/><path d="M1162.45,325.3 H1174.45 M1162.45,341.3 H1174.45" stroke="#ffffff" stroke-width="1.8"/><path d="M1163.45,326.3 C1163.45,331.3 1167.45,332.3 1167.45,333.3 C1167.45,334.3 1163.45,335.3 1163.45,340.3 H1173.45 C1173.45,335.3 1169.45,334.3 1169.45,333.3 C1169.45,332.3 1173.45,331.3 1173.45,326.3 Z" fill="none" stroke="#ffffff" stroke-width="1.5"/><path d="M1164.95,339.3 L1168.45,336.3 L1171.95,339.3 Z" fill="#ffffff"/><rect x="1155.8" y="372.9" width="25.3" height="25.3" rx="6" fill="url(#g6)"/><circle cx="1168.45" cy="385.5" r="8.6" fill="none" stroke="#f2f2f2" stroke-width="1.6" stroke-dasharray="1.3 1.1"/><circle cx="1168.45" cy="385.5" r="7.2" fill="none" stroke="#f2f2f2" stroke-width="1.1"/><circle cx="1168.45" cy="385.5" r="1.6" fill="none" stroke="#f2f2f2" stroke-width="1"/><path d="M1167.05,384.7 L1161.45,381.5 M1170.05,385.5 L1175.65,385.5 M1167.05,386.3 L1164.8500000000001,391.9" stroke="#f2f2f2" stroke-width="1.2"/><rect x="1155.8" y="408.9" width="25.3" height="25.3" rx="6" fill="url(#g7)"/><circle cx="1168.45" cy="421.5" r="7.8" fill="none" stroke="#ffffff" stroke-width="1.5"/><path d="M1168.45,413.7 A7.8,7.8 0 0 0 1168.45,429.3 Z" fill="#ffffff"/><ellipse cx="1168.45" cy="421.5" rx="2.4" ry="6.2" fill="#000"/><rect x="1155.8" y="444.4" width="25.3" height="25.3" rx="6" fill="url(#g8)"/><circle cx="1168.45" cy="457" r="8.5" fill="none" stroke="#ffffff" stroke-width="1.4"/><circle cx="1168.45" cy="452.2" r="1.4" fill="#ffffff"/><path d="M1163.45,454.7 H1173.45 M1168.45,454.7 V458.5 L1165.95,463 M1168.45,458.5 L1170.95,463" fill="none" stroke="#ffffff" stroke-width="1.5" stroke-linecap="round"/><rect x="1155.8" y="479.9" width="25.3" height="25.3" rx="6" fill="url(#g9)"/><rect x="1159.95" y="485.0" width="17" height="6.5" rx="3.25" fill="none" stroke="#ffffff" stroke-width="1.4"/><circle cx="1163.45" cy="488.25" r="2" fill="#ffffff"/><rect x="1159.95" y="493.5" width="17" height="6.5" rx="3.25" fill="#ffffff"/><circle cx="1173.45" cy="496.75" r="2.2" fill="#8a8a90"/><rect x="1155.8" y="515.6" width="25.3" height="25.3" rx="6" fill="url(#g10)"/><circle cx="1168.45" cy="528.2" r="11.8" fill="url(#siri)"/><circle cx="1172.95" cy="523.7" r="5" fill="#2fa860" opacity="0.55"/><circle cx="1163.45" cy="529.2" r="4" fill="#e05060" opacity="0.45"/><circle cx="1168.45" cy="528.2" r="8" fill="url(#siriw)"/><rect x="1155.8" y="551.2" width="25.3" height="25.3" rx="6" fill="url(#g11)"/><g fill="#ffffff"><rect x="1161.25" y="558.3" width="3" height="10" rx="1.5"/><rect x="1164.55" y="555.1999999999999" width="3" height="12" rx="1.5"/><rect x="1167.8500000000001" y="554.8" width="3" height="12" rx="1.5"/><rect x="1171.15" y="556.5999999999999" width="3" height="11" rx="1.5"/><path d="M1161.25,564.8 L1174.15,564.8 L1174.45,566.3 L1176.95,562.3 C1178.05,561.1999999999999 1179.25,562.5999999999999 1178.45,563.8 L1174.45,570.3 C1172.95,572.4 1170.45,573.0 1167.45,573.0 C1163.45,573.0 1161.25,569.8 1161.25,566.8 Z"/></g><rect x="1155.8" y="603.6" width="25.3" height="25.3" rx="6" fill="url(#g12)"/><rect x="1160.45" y="610.2" width="16" height="12" rx="1" fill="none" stroke="#ffffff" stroke-width="1.4"/><rect x="1162.45" y="617.2" width="12" height="3" fill="#ffffff"/><rect x="1155.8" y="639.1" width="25.3" height="25.3" rx="6" fill="url(#g13)"/><circle cx="1168.45" cy="651.7" r="4.5" fill="#ffffff"/><path d="M1174.95,651.70 L1177.25,651.70" stroke="#ffffff" stroke-width="1.5" stroke-linecap="round"/><path d="M1173.05,656.30 L1174.67,657.92" stroke="#ffffff" stroke-width="1.5" stroke-linecap="round"/><path d="M1168.45,658.20 L1168.45,660.50" stroke="#ffffff" stroke-width="1.5" stroke-linecap="round"/><path d="M1163.85,656.30 L1162.23,657.92" stroke="#ffffff" stroke-width="1.5" stroke-linecap="round"/><path d="M1161.95,651.70 L1159.65,651.70" stroke="#ffffff" stroke-width="1.5" stroke-linecap="round"/><path d="M1163.85,647.10 L1162.23,645.48" stroke="#ffffff" stroke-width="1.5" stroke-linecap="round"/><path d="M1168.45,645.20 L1168.45,642.90" stroke="#ffffff" stroke-width="1.5" stroke-linecap="round"/><path d="M1173.05,647.10 L1174.67,645.48" stroke="#ffffff" stroke-width="1.5" stroke-linecap="round"/><rect x="1155.8" y="674.6" width="25.3" height="25.3" rx="6" fill="url(#g14)"/><ellipse cx="1168.45" cy="683.0" rx="2.8" ry="4.2" fill="none" stroke="#ffffff" stroke-width="1.1" transform="rotate(0 1168.45 687.2)"/><ellipse cx="1168.45" cy="683.0" rx="2.8" ry="4.2" fill="none" stroke="#ffffff" stroke-width="1.1" transform="rotate(45 1168.45 687.2)"/><ellipse cx="1168.45" cy="683.0" rx="2.8" ry="4.2" fill="none" stroke="#ffffff" stroke-width="1.1" transform="rotate(90 1168.45 687.2)"/><ellipse cx="1168.45" cy="683.0" rx="2.8" ry="4.2" fill="none" stroke="#ffffff" stroke-width="1.1" transform="rotate(135 1168.45 687.2)"/><ellipse cx="1168.45" cy="683.0" rx="2.8" ry="4.2" fill="none" stroke="#ffffff" stroke-width="1.1" transform="rotate(180 1168.45 687.2)"/><ellipse cx="1168.45" cy="683.0" rx="2.8" ry="4.2" fill="none" stroke="#ffffff" stroke-width="1.1" transform="rotate(225 1168.45 687.2)"/><ellipse cx="1168.45" cy="683.0" rx="2.8" ry="4.2" fill="none" stroke="#ffffff" stroke-width="1.1" transform="rotate(270 1168.45 687.2)"/><ellipse cx="1168.45" cy="683.0" rx="2.8" ry="4.2" fill="none" stroke="#ffffff" stroke-width="1.1" transform="rotate(315 1168.45 687.2)"/><rect x="1155.8" y="710.2" width="25.3" height="25.3" rx="6" fill="url(#g15)"/><rect x="1159.95" y="716.3" width="17" height="13" rx="1" fill="none" stroke="#ffffff" stroke-width="1.4" stroke-dasharray="2 1"/><path d="M1167.45,719.3 A3.5,3.5 0 1 0 1170.95,723.8 A2.8,2.8 0 0 1 1167.45,719.3Z" fill="#ffffff"/><rect x="1155.8" y="745.8" width="25.3" height="25.3" rx="6" fill="url(#g16)"/><rect x="1159.45" y="753.9" width="16.5" height="9" rx="2" fill="#ffffff" stroke="#e8ffe8" stroke-width="1"/><rect x="1176.45" y="756.6" width="1.5" height="3.6" rx="0.6" fill="#ffffff"/><path d="M1450.6,24.5 L1441.5,32.7 L1450.6,40.9" fill="none" stroke="#d0d0d0" stroke-width="1.8" stroke-linecap="round" stroke-linejoin="round"/><path d="M1487.2,24.5 L1496.3,32.7 L1487.2,40.9" fill="none" stroke="#6a6a68" stroke-width="1.8" stroke-linecap="round" stroke-linejoin="round"/><rect x="1436.8" y="66.9" width="583" height="321.5" rx="9" fill="#2e2f2b"/><path d="M1437,153 H2019.5" stroke="#3d3e3a" stroke-width="1"/><path d="M1487,204.0 H2007" stroke="#3d3e3a" stroke-width="1"/><rect x="1974.4" y="172.5" width="32.6" height="19.3" rx="9.65" fill="#1e6de4"/><circle cx="1997.6" cy="182.2" r="8.2" fill="#cfcfcf"/><path d="M1487,254.5 H2007" stroke="#3d3e3a" stroke-width="1"/><rect x="1974.4" y="223.0" width="32.6" height="19.3" rx="9.65" fill="#474846"/><circle cx="1983.6" cy="232.7" r="8.2" fill="#cfcfcf"/><path d="M1487,305.8 H2007" stroke="#3d3e3a" stroke-width="1"/><rect x="1974.4" y="274.3" width="32.6" height="19.3" rx="9.65" fill="#1e6de4"/><circle cx="1997.6" cy="283.9" r="8.2" fill="#cfcfcf"/><rect x="1974.4" y="325.3" width="32.6" height="19.3" rx="9.65" fill="#474846"/><circle cx="1983.6" cy="334.9" r="8.2" fill="#cfcfcf"/><path d="M1437,358.4 H2019.5 V379.4 A9,9 0 0 1 2010.5,388.4 H1446 A9,9 0 0 1 1437,379.4 Z" fill="#393a36"/><path d="M1437,358.4 H2019.5" stroke="#42433f" stroke-width="1"/><rect x="1436.8" y="66.9" width="583" height="321.5" rx="9" fill="none" stroke="#464743" stroke-width="1"/><path d="M1445.5,373.7 H1456.5 M1451,368.2 V379.2" stroke="#c8c8c8" stroke-width="1.6"/><path d="M1466.8,365 V382" stroke="#454642" stroke-width="1"/><path d="M1477.4,373.7 H1488.4" stroke="#7a7a78" stroke-width="1.6"/><rect x="1449.5" y="167.5" width="23.5" height="23.8" rx="5" fill="#0d1513" stroke="#8a8c8a" stroke-width="1.2"/><circle cx="1455" cy="173" r="2.6" fill="#1f6e3a" opacity="0.8"/><circle cx="1455" cy="173" r="0.9" fill="#4fff70"/><rect x="1448.4" y="218.2" width="25.8" height="22.4" rx="1" fill="#262626" stroke="#a0a0a0" stroke-width="1.1"/><path d="M1452,222.8 h1.6 m0.8,0 h1.6 m0.8,0 h1.6 m0.8,0 h1.2" stroke="#3bdc4a" stroke-width="1.6"/><path d="M1449,291 C1447,288 1448,283 1446.5,281 C1448,279 1449,277 1452,276 C1455,271 1462,269.5 1466,272 C1469,273.5 1470,276 1470.5,278 C1472.5,278 1474,276 1476.5,275.5 C1475,279 1472,281 1469.5,281.5 C1469,285 1467.5,287 1466.5,288 L1466.5,292.6 L1460.5,292.6 L1460,289 C1458,289.5 1457,289.5 1456,289 L1455.5,292.8 L1450,292.8 Z" fill="#fbb12b"/><rect x="1449" y="320" width="24.6" height="24.3" rx="5.5" fill="#fcfcfc"/><path d="M1466.5,323.8 L1470,325.6 V338.7 L1466.5,340.5 Z" fill="#2a8ae6"/><path d="M1467,324.5 L1455,335 L1452,332.8 M1467,339.8 L1455,329.3 L1452,331.5" fill="none" stroke="#1a6fd0" stroke-width="2.6"/></svg>
<div class="t" style="left:45.90px;top:78px;font-size:17px;line-height:17px;color:#6f6f6f;font-weight:normal;font-family:'Liberation Sans',sans-serif;">Search</div>
<div class="t" style="left:53.10px;top:131px;font-size:17.2px;line-height:17.2px;color:#e3e3e3;font-weight:normal;font-family:'Liberation Sans',sans-serif;">Network</div>
<div class="t" style="left:53.10px;top:167px;font-size:17.2px;line-height:17.2px;color:#e3e3e3;font-weight:normal;font-family:'Liberation Sans',sans-serif;">VPN</div>
<div class="t" style="left:53.10px;top:219px;font-size:17.2px;line-height:17.2px;color:#e3e3e3;font-weight:normal;font-family:'Liberation Sans',sans-serif;">Notifications</div>
<div class="t" style="left:53.10px;top:255px;font-size:17.2px;line-height:17.2px;color:#e3e3e3;font-weight:normal;font-family:'Liberation Sans',sans-serif;">Sound</div>
<div class="t" style="left:53.10px;top:290px;font-size:17.2px;line-height:17.2px;color:#e3e3e3;font-weight:normal;font-family:'Liberation Sans',sans-serif;">Focus</div>
<div class="t" style="left:53.10px;top:326px;font-size:17.2px;line-height:17.2px;color:#e3e3e3;font-weight:normal;font-family:'Liberation Sans',sans-serif;">Screen Time</div>
<div class="t" style="left:53.10px;top:378px;font-size:17.2px;line-height:17.2px;color:#e3e3e3;font-weight:normal;font-family:'Liberation Sans',sans-serif;">General</div>
<div class="t" style="left:53.10px;top:414px;font-size:17.2px;line-height:17.2px;color:#e3e3e3;font-weight:normal;font-family:'Liberation Sans',sans-serif;">Appearance</div>
<div class="t" style="left:53.10px;top:450px;font-size:17.2px;line-height:17.2px;color:#e3e3e3;font-weight:normal;font-family:'Liberation Sans',sans-serif;">Accessibility</div>
<div class="t" style="left:53.10px;top:485px;font-size:17.2px;line-height:17.2px;color:#e3e3e3;font-weight:normal;font-family:'Liberation Sans',sans-serif;">Control Center</div>
<div class="t" style="left:53.10px;top:521px;font-size:17.2px;line-height:17.2px;color:#e3e3e3;font-weight:normal;font-family:'Liberation Sans',sans-serif;">Siri &amp; Spotlight</div>
<div class="t" style="left:53.10px;top:556px;font-size:17.2px;line-height:17.2px;color:#e3e3e3;font-weight:normal;font-family:'Liberation Sans',sans-serif;">Privacy &amp; Security</div>
<div class="t" style="left:53.10px;top:609px;font-size:17.2px;line-height:17.2px;color:#e3e3e3;font-weight:normal;font-family:'Liberation Sans',sans-serif;">Desktop &amp; Dock</div>
<div class="t" style="left:53.10px;top:644px;font-size:17.2px;line-height:17.2px;color:#e3e3e3;font-weight:normal;font-family:'Liberation Sans',sans-serif;">Displays</div>
<div class="t" style="left:53.10px;top:680px;font-size:17.2px;line-height:17.2px;color:#e3e3e3;font-weight:normal;font-family:'Liberation Sans',sans-serif;">Wallpaper</div>
<div class="t" style="left:53.10px;top:715px;font-size:17.2px;line-height:17.2px;color:#e3e3e3;font-weight:normal;font-family:'Liberation Sans',sans-serif;">Screen Saver</div>
<div class="t" style="left:53.10px;top:751px;font-size:17.2px;line-height:17.2px;color:#e3e3e3;font-weight:normal;font-family:'Liberation Sans',sans-serif;">Battery</div>
<div class="t" style="left:387.80px;top:22px;font-size:20px;line-height:20px;color:#eeeeee;font-weight:bold;font-family:'Liberation Sans',sans-serif;-webkit-text-stroke:0;letter-spacing:-0.85px;">Full Disk Access</div>
<div class="t" style="left:313.30px;top:81px;font-size:17.3px;line-height:17.3px;color:#a9a9a9;font-weight:normal;font-family:'Liberation Sans',sans-serif;">Allow the applications below to access data like Mail, Messages, Safari,</div>
<div class="t" style="left:313.30px;top:102px;font-size:17.3px;line-height:17.3px;color:#a9a9a9;font-weight:normal;font-family:'Liberation Sans',sans-serif;">Home, Time Machine backups, and certain administrative settings for all</div>
<div class="t" style="left:313.30px;top:122px;font-size:17.3px;line-height:17.3px;color:#a9a9a9;font-weight:normal;font-family:'Liberation Sans',sans-serif;">users on this Mac.</div>
<div class="t" style="left:351.50px;top:172px;font-size:17.2px;line-height:17.2px;color:#e3e3e3;font-weight:normal;font-family:'Liberation Sans',sans-serif;">iTerm</div>
<div class="t" style="left:351.50px;top:223px;font-size:17.2px;line-height:17.2px;color:#e3e3e3;font-weight:normal;font-family:'Liberation Sans',sans-serif;">sshd-keygen-wrapper</div>
<div class="t" style="left:351.50px;top:274px;font-size:17.2px;line-height:17.2px;color:#e3e3e3;font-weight:normal;font-family:'Liberation Sans',sans-serif;">TablePlus</div>
<div class="t" style="left:351.50px;top:325px;font-size:17.2px;line-height:17.2px;color:#e3e3e3;font-weight:normal;font-family:'Liberation Sans',sans-serif;">Visual Studio Code</div>
</div>
<div class="a" style="left:1135.5px;top:0;width:909.5px;height:795.5px;border-radius:11px;border:1px solid rgba(255,255,255,0.17);border-top-color:rgba(255,255,255,0.36)"></div>
</body></html>
